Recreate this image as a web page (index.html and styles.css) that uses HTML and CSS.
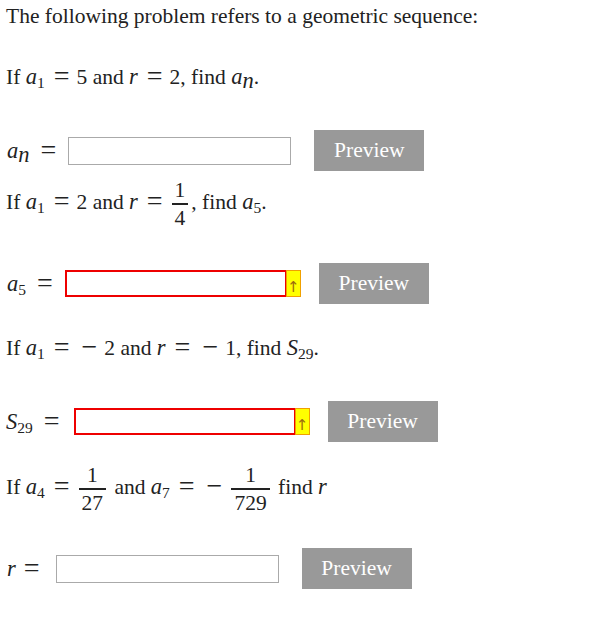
FILE: index.html
```html
<!DOCTYPE html>
<html lang="en">
<head>
  <meta charset="UTF-8" />
  <title>Geometric sequence</title>
  <link rel="stylesheet" href="styles.css">
</head>
<body>

  <p class="intro">The following problem refers to a geometric sequence:</p>

  <p class="q q1">If <span class="v">a</span><sub>1</sub><span class="op">=</span>5 and <span class="v">r</span><span class="op">=</span>2, find <span class="v">a</span><sub class="v">n</sub>.</p>

  <div class="row row1">
    <span class="lbl"><span class="v">a</span><sub class="v">n</sub><span class="op">=</span></span>
    <div class="field"><input type="text"></div>
    <button class="btn">Preview</button>
  </div>

  <p class="q tall q2">If <span class="v">a</span><sub>1</sub><span class="op">=</span><span>2 and </span><span class="v">r</span><span class="op">=</span><span class="frac"><span class="num">1</span><span class="den">4</span></span>, find <span class="v">a</span><sub>5</sub>.</p>

  <div class="row row2">
    <span class="lbl"><span class="v">a</span><sub>5</sub><span class="op">=</span></span>
    <div class="field bad"><input type="text"><span class="flag">↑</span></div>
    <button class="btn">Preview</button>
  </div>

  <p class="q q3">If <span class="v">a</span><sub>1</sub><span class="op">=</span><span class="neg">−</span>2 and <span class="v">r</span><span class="op">=</span><span class="neg">−</span>1, find <span class="v">S</span><sub>29</sub>.</p>

  <div class="row row3">
    <span class="lbl"><span class="v">S</span><sub>29</sub><span class="op">=</span></span>
    <div class="field bad"><input type="text"><span class="flag">↑</span></div>
    <button class="btn">Preview</button>
  </div>

  <p class="q tall q4">If <span class="v">a</span><sub>4</sub><span class="op">=</span><span class="frac"><span class="num">1</span><span class="den">27</span></span> and <span class="v">a</span><sub>7</sub><span class="op">=</span><span class="neg">−</span><span class="frac"><span class="num">1</span><span class="den">729</span></span> find <span class="v">r</span></p>

  <div class="row row4">
    <span class="lbl"><span class="v">r</span><span class="op">=</span></span>
    <div class="field"><input type="text"></div>
    <button class="btn">Preview</button>
  </div>

</body>
</html>
```

FILE: styles.css
```css
body {
  margin: 0;
  padding: 0 6px;
  font-family: 'Liberation Serif', 'Times New Roman', serif;
  font-size: 21.5px;
  color: #222;
  background: #fff;
}

p {
  margin: 0;
}

.intro {
  height: 32px;
  line-height: 32px;
}

.q {
  height: 32px;
  line-height: 32px;
  white-space: nowrap;
}

.q.tall {
  height: 52px;
  line-height: 52px;
}

.q1 { margin-top: 29px; }
.q2 { margin-top: 5px; }
.q3 { margin-top: 28px; }
.q4 { margin-top: 19px; }

.v {
  font-style: italic;
  font-size: 22.5px;
}

sub {
  font-size: 15.5px;
  vertical-align: -4px;
  line-height: 0;
}

.op,
.neg {
  display: inline-block;
  font-size: 28px;
  line-height: 20px;
  vertical-align: -1px;
}

.op {
  margin: 0 7px 0 9px;
}

.neg {
  margin: 0 7px 0 5px;
}

.frac {
  display: inline-block;
  vertical-align: middle;
  text-align: center;
  line-height: 24px;
  margin: 0 3px 0 2px;
}

.frac .num,
.frac .den {
  display: block;
  padding: 0 3px;
}

.frac .num {
  border-bottom: 2px solid #222;
  padding-bottom: 1px;
}

.frac .den {
  padding-top: 1px;
}

.row {
  display: flex;
  align-items: center;
  height: 41px;
}

.row1 { margin-top: 37px; }
.row2 { margin-top: 35px; }
.row3 { margin-top: 37px; }
.row4 { margin-top: 35px; }

.lbl {
  white-space: nowrap;
  padding-left: 1px;
  margin-right: 12px;
}

.lbl .op {
  margin: 0 0 0 11px;
}

.row2 .lbl { margin-right: 12px; }
.row3 .lbl { padding-left: 0; margin-right: 14px; }
.row4 .lbl { margin-right: 16px; }
.row4 .lbl .op { margin-left: 8px; }

.field {
  display: flex;
  align-items: stretch;
  height: 28px;
  margin-right: 23px;
}

.field input {
  box-sizing: border-box;
  width: 223px;
  height: 100%;
  margin: 0;
  border: 1px solid #aaa;
  padding: 2px 4px;
  font: inherit;
}

.field.bad {
  height: 27px;
  margin-right: 18px;
}

.field.bad input {
  width: 221px;
  border: 1px solid #e00;
  border-width: 2px 1px 2px 2px;
}

.flag {
  box-sizing: border-box;
  width: 15px;
  display: flex;
  justify-content: center;
  align-items: flex-end;
  background: #ff0;
  border: 1px solid #f0a000;
  color: #9a6a10;
  font-family: 'DejaVu Sans', sans-serif;
  font-size: 15px;
  line-height: 17px;
}

.btn {
  width: 110px;
  height: 41px;
  border: none;
  background: #999;
  color: #fff;
  font-family: inherit;
  font-size: 21.5px;
  padding: 0;
}
```
